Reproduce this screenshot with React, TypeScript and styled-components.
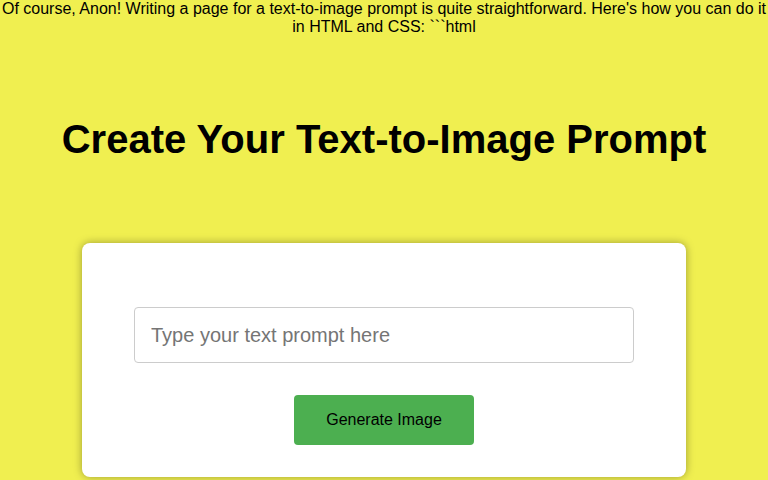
import styled, { createGlobalStyle } from 'styled-components';

const GlobalStyle = createGlobalStyle`
  html, body {
    margin: 0;
    padding: 0;
  }
  body {
    background: #f0ef50;
    font-family: 'Liberation Sans', Arial, sans-serif;
    color: #000;
  }
`;

const Page = styled.div`
  display: flex;
  flex-direction: column;
  align-items: center;
  min-height: 480px;
`;

const Intro = styled.p`
  margin: 0;
  font-size: 16px;
  line-height: 18px;
  text-align: center;
`;

const Title = styled.h1`
  margin: 80px 0 81px;
  font-size: 40px;
  font-weight: bold;
  line-height: 46px;
  text-align: center;
`;

const Card = styled.div`
  box-sizing: border-box;
  width: 604px;
  background: #fff;
  border-radius: 8px;
  box-shadow: 0 0 8px rgba(0, 0, 0, 0.35);
  padding: 64px 52px 32px;
  display: flex;
  flex-direction: column;
  align-items: center;
  gap: 32px;
`;

const PromptInput = styled.input`
  box-sizing: border-box;
  width: 500px;
  height: 56px;
  padding: 0 16px;
  border: 1px solid #ccc;
  border-radius: 4px;
  font-family: 'Liberation Sans', Arial, sans-serif;
  font-size: 20px;
  outline: none;
  &::placeholder {
    color: #757575;
  }
`;

const GenerateButton = styled.button`
  width: 180px;
  height: 50px;
  border: none;
  border-radius: 4px;
  background: #4caf50;
  color: #000;
  font-family: 'Liberation Sans', Arial, sans-serif;
  font-size: 16px;
  cursor: pointer;
`;

export default function App() {
  return (
    <>
      <GlobalStyle />
      <Page>
        <Intro>
          Of course, Anon! Writing a page for a text-to-image prompt is quite straightforward. Here's how you can do it in HTML and CSS: ```html
        </Intro>
        <Title>Create Your Text-to-Image Prompt</Title>
        <Card>
          <PromptInput type="text" placeholder="Type your text prompt here" />
          <GenerateButton>Generate Image</GenerateButton>
        </Card>
      </Page>
    </>
  );
}
